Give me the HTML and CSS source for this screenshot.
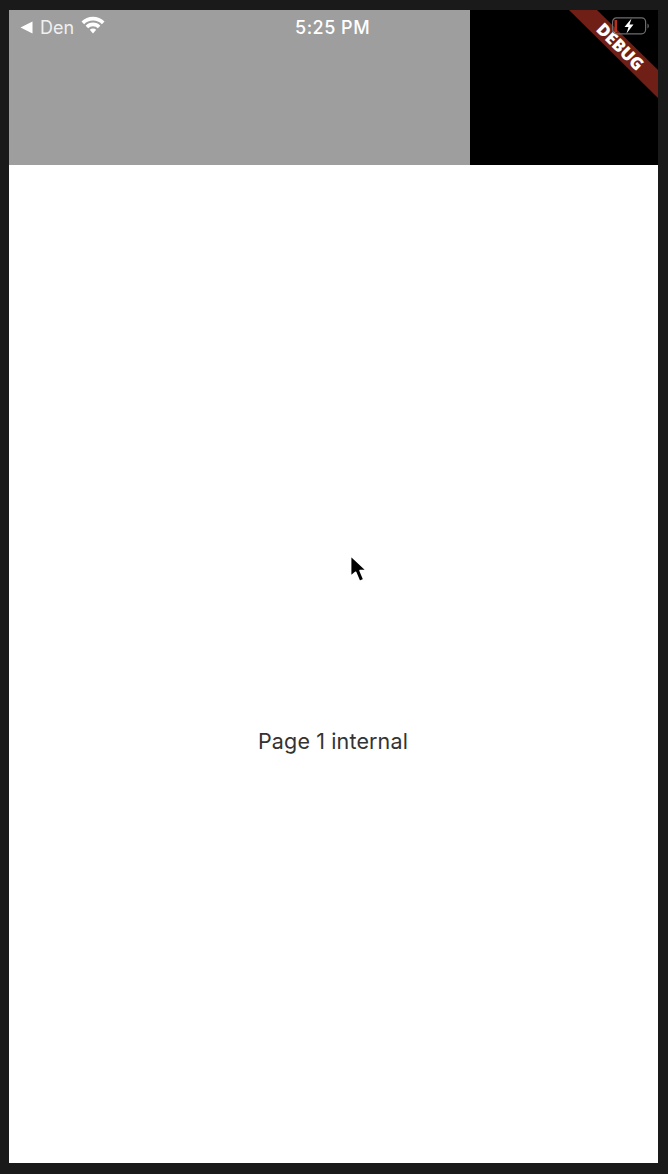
FILE: index.html
```html
<!DOCTYPE html>
<html>
	<head>
		<meta charset="UTF-8"/>
		<meta name="viewport" content="width=device-width, initial-scale=1.0"/>
		<title>Page 1 internal</title>
		<link rel="stylesheet" href="styles.css">
	</head>
	<body>
		<div class="screen">
			<div class="top">
				<div class="top-grey"></div>
				<div class="top-black"></div>
			</div>

			<div class="page">
				<span class="page-title">Page 1 internal</span>
			</div>

			<svg class="debug-banner" width="89" height="88" viewBox="0 0 89 88">
				<polygon points="0,0 28,0 89,60 89,88" fill="#701f17"/>
				<text class="debug-text" x="47" y="41" transform="rotate(45 47 41)">DEBUG</text>
			</svg>

			<div class="status-bar">
				<div class="status-left">
					<svg class="back-arrow" width="13" height="13" viewBox="0 0 13 13">
						<polygon points="0.5,6.5 12.5,0.5 12.5,12.5" fill="#fff"/>
					</svg>
					<span class="carrier">Den</span>
					<svg class="wifi" width="24" height="18" viewBox="0 0 24 18">
						<path d="M0.5 5.6 A16 16 0 0 1 23.5 5.6 L20.9 8.2 A12.4 12.4 0 0 0 3.1 8.2 Z" fill="#fff"/>
						<path d="M4.6 9.7 A10 10 0 0 1 19.4 9.7 L16.8 12.3 A6.4 6.4 0 0 0 7.2 12.3 Z" fill="#fff"/>
						<path d="M8.8 13.8 A4.4 4.4 0 0 1 15.2 13.8 L12 17.4 Z" fill="#fff"/>
					</svg>
				</div>
				<span class="clock">5:25 PM</span>
				<svg class="battery" width="38" height="18" viewBox="0 0 38 18">
					<rect x="0.6" y="0.8" width="33" height="16" rx="4" fill="none" stroke="#6e6e6e" stroke-width="1.2"/>
					<rect x="2.5" y="3" width="2.5" height="12" fill="#b5301f"/>
					<path d="M35.5 6.5 a3 3 0 0 1 0 5 Z" fill="#6e6e6e"/>
					<path d="M19.5 1.5 L12.5 10 L16.5 10 L14.5 16.5 L21.5 7.5 L17.5 7.5 Z" fill="#fff"/>
				</svg>
			</div>

			<svg class="cursor" width="25" height="36" viewBox="0 0 22 32">
				<path d="M3 2 L3 21 L7.5 17.2 L11 25.5 L15 23.7 L11.6 15.6 L17.5 15.6 Z" fill="#000" stroke="#fff" stroke-width="1.6" stroke-linejoin="round"/>
			</svg>
		</div>
	</body>
</html>
```

FILE: styles.css
```css
html, body {
	height: 100%;
}

body {
	margin: 0;
	padding: 10px 10px 11px 9px;
	box-sizing: border-box;
	background: #1a1a1a;
	font-family: Inter, "Liberation Sans", sans-serif;
}

.screen {
	position: relative;
	display: flex;
	flex-direction: column;
	height: 100%;
	background: white;
	overflow: hidden;
}

.top {
	display: flex;
	height: 155px;
	flex-shrink: 0;
}

.top-grey {
	width: 461px;
	background: #9e9e9e;
}

.top-black {
	flex: 1;
	background: black;
}

.page {
	flex: 1;
	display: flex;
	align-items: center;
	justify-content: center;
	padding-top: 154px;
	padding-right: 1px;
}

.page-title {
	font-size: 21.5px;
	letter-spacing: 0.13px;
	color: #333;
}

.status-bar {
	position: absolute;
	top: 5px;
	left: 0;
	right: 0;
	height: 24px;
	display: flex;
	align-items: center;
	color: white;
}

.status-left {
	display: flex;
	align-items: center;
	margin-left: 11px;
}

.carrier {
	margin-left: 7px;
	font-size: 18px;
	color: #f0f0f0;
}

.wifi {
	margin-left: 7px;
	margin-top: -4px;
}

.clock {
	position: absolute;
	left: 286px;
	font-size: 18px;
	font-weight: 500;
	letter-spacing: 0.5px;
}

.battery {
	position: absolute;
	left: 603px;
	top: 2px;
}

.debug-banner {
	position: absolute;
	top: 0;
	right: 0;
}

.debug-text {
	font-family: "Open Sans", "Liberation Sans", sans-serif;
	font-size: 17px;
	font-weight: 800;
	fill: white;
	text-anchor: middle;
}

.cursor {
	position: absolute;
	left: 338px;
	top: 543px;
}
```
